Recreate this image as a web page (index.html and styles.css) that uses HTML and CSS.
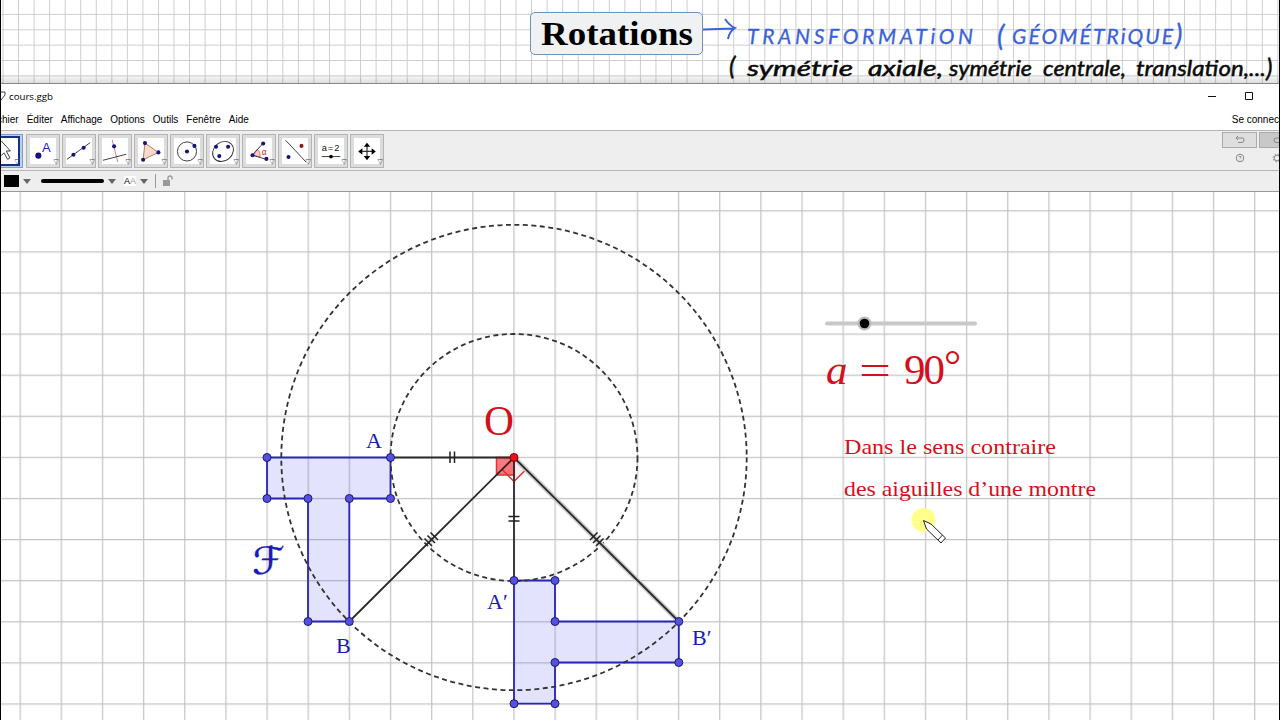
FILE: index.html
```
<!DOCTYPE html>
<html lang="fr">
<head>
    <meta charset="UTF-8">
    <meta name="viewport" content="width=device-width, initial-scale=1.0">
    <title>cours.ggb</title>
    <link rel="stylesheet" href="styles.css">
</head>
<body>

    <header class="notes">
        <h1 class="title"><svg width="152" height="38"><text x="0" y="31" textLength="152" lengthAdjust="spacingAndGlyphs">Rotations</text></svg></h1>
        <svg class="ink" width="576" height="84" viewBox="703 0 576 84">
            <path class="blue-stroke" d="M703 29.5 L733 28.5 M725 19 Q730 26 735 28 Q729 32 728 39"/>
            <g class="hand-blue">
                <text x="747" y="44" textLength="226">TRANSFORMATiON</text>
                <text class="paren" x="997" y="46">(</text>
                <text x="1012" y="44" textLength="161">GÉOMÉTRiQUE</text>
                <text class="paren" x="1175" y="45">)</text>
            </g>
            <g class="hand-black">
                <text class="paren" x="729" y="75">(</text>
                <text x="747" y="76" textLength="106" lengthAdjust="spacingAndGlyphs">symétrie</text>
                <text x="868" y="76" textLength="75" lengthAdjust="spacingAndGlyphs">axiale,</text>
                <text x="949" y="76" textLength="83" lengthAdjust="spacingAndGlyphs">symétrie</text>
                <text x="1043" y="76" textLength="83" lengthAdjust="spacingAndGlyphs">centrale,</text>
                <text x="1136" y="76" textLength="130" lengthAdjust="spacingAndGlyphs">translation,...</text>
                <text class="paren" x="1266" y="77">)</text>
            </g>
        </svg>
    </header>

    <div class="titlebar">
        <svg class="logo" width="6" height="12"><path d="M0 2 L4 2 L4 5 L0 10" fill="none" stroke="#444"/></svg>
        <span class="filename">cours.ggb</span>
        <svg class="winbtns" width="44" height="12">
            <path d="M1 6.500 H9 M38.500 2.500 H45.500 V9.500 H38.500 Z" fill="none" stroke="#111"/>
        </svg>
    </div>

    <nav class="menu">
        <span class="first">chier</span>
        <span>Éditer</span>
        <span>Affichage</span>
        <span>Options</span>
        <span>Outils</span>
        <span>Fenêtre</span>
        <span>Aide</span>
        <span class="login">Se connec</span>
    </nav>

    <div class="toolbar">
        <div class="tool active"><svg viewBox="0 0 18 28"><path class="cursor" d="M0 3 L10 14 H5.500 L9.500 21.500 L7 23 L3 16 L0 19"/></svg></div>
        <div class="tool"><svg viewBox="0 0 28 28"><circle class="pt" cx="9" cy="19" r="3.300"/><text class="big-a" x="13" y="15">A</text></svg></div>
        <div class="tool"><svg viewBox="0 0 28 28"><path d="M1 23 L26 5"/><circle class="pt" cx="8" cy="18" r="2.200"/><circle class="pt" cx="19" cy="10.500" r="2.200"/></svg></div>
        <div class="tool"><svg viewBox="0 0 28 28"><path class="red" d="M11 2 L17 26"/><path d="M1 24 L26 17.500"/><circle class="pt" cx="13" cy="9" r="2.200"/></svg></div>
        <div class="tool"><svg viewBox="0 0 28 28"><path class="tri" d="M7.500 5.500 L22 15.500 L5.500 23.500 Z"/><circle class="pt" cx="7.500" cy="5.500" r="2.200"/><circle class="pt" cx="22" cy="15.500" r="2.200"/><circle class="pt" cx="5.500" cy="23.500" r="2.200"/></svg></div>
        <div class="tool"><svg viewBox="0 0 28 28"><circle cx="14" cy="14.500" r="10.300"/><circle class="pt" cx="14" cy="14.500" r="2.200"/><circle class="pt" cx="22" cy="8.500" r="2.200"/></svg></div>
        <div class="tool"><svg viewBox="0 0 28 28"><ellipse cx="14" cy="14.500" rx="12" ry="10" transform="rotate(-40 14 14.500)"/><circle class="pt" cx="6.500" cy="9.500" r="2.200"/><circle class="pt" cx="19.500" cy="9.500" r="2.200"/><circle class="pt" cx="10" cy="19.500" r="2.200"/></svg></div>
        <div class="tool"><svg viewBox="0 0 28 28"><path class="wedge" d="M7 18.500 L12 12 Q16 15 15 20.500 Z"/><path d="M18 6 L7 18.500 L22 23"/><circle class="pt" cx="18.500" cy="6" r="2.200"/><circle class="pt" cx="7" cy="18.500" r="2.200"/><circle class="pt" cx="22" cy="22.500" r="2.200"/><text class="alpha" x="17" y="18">α</text></svg></div>
        <div class="tool"><svg viewBox="0 0 28 28"><path d="M4 2.500 L26 26"/><circle class="pt" cx="7" cy="20.500" r="2.200"/><circle class="rpt" cx="21" cy="8.500" r="2.200"/></svg></div>
        <div class="tool"><svg viewBox="0 0 28 28"><text class="a2" x="4" y="14" textLength="19">a=2</text><path d="M4 20 H24"/><circle cx="14" cy="20" r="2" class="blk"/></svg></div>
        <div class="tool"><svg viewBox="0 0 28 28"><path d="M6 14.500 H22 M14 6.500 V22.500" stroke-width="1.300"/><path class="blk" d="M14 5 L17.500 9.500 H10.500 Z M14 24 L17.500 19.500 H10.500 Z M4.500 14.500 L9 11 V18 Z M23.500 14.500 L19 11 V18 Z"/></svg></div>
        <div class="history">
            <div class="btn"><svg width="12" height="10"><path d="M2 3 H9 Q10 3 10 5 Q10 7.500 8 7.500 H4 M4 1 L2 3 L4 5"/></svg></div>
            <div class="btn dark"><svg width="12" height="10"><path d="M12 3 H5 Q3 3 3 5 Q3 7.500 5 7.500 H12"/></svg></div>
            <svg class="help" width="10" height="10"><circle cx="5" cy="5" r="3.800"/><path d="M3.800 4 Q5 2 6.200 4 L5 5.500 M5 6.800 V7.500"/></svg>
            <svg class="gear" width="10" height="10"><circle cx="5" cy="5" r="2.800"/><circle cx="5" cy="5" r="3.900" stroke-dasharray="1.500 1.560"/></svg>
        </div>
    </div>

    <div class="stylebar">
        <span class="swatch"></span>
        <span class="caret"></span>
        <span class="line-style"></span>
        <span class="caret"></span>
        <span class="size">A<i>A</i></span>
        <span class="caret"></span>
        <span class="sep"></span>
        <svg class="lock" width="12" height="12"><path d="M1 5 H8 V11 H1 Z" fill="#999"/><path d="M6 5 V3 Q6 1 8 1 Q10 1 10 3 V4.500" fill="none" stroke="#999" stroke-width="1.400"/></svg>
    </div>

    <svg class="board" width="1280" height="528" viewBox="0 192 1280 528">
        <defs>
            <pattern id="grid" width="41.150" height="41.100" patternUnits="userSpaceOnUse" x="20.200" y="210.900">
                <path d="M0 0.700 H41.150 M0.700 0 V41.100" stroke="#c3c3c3" stroke-width="1.200"/>
            </pattern>
        </defs>
        <rect x="0" y="192" width="1281" height="529" fill="url(#grid)" transform="translate(-0.700 -0.700)"/>

        <!-- figure and its image -->
        <g class="shape">
            <path d="M267 457.500 H390.500 V498.500 H349.300 V621.500 H308 V498.500 H267 Z"/>
            <path d="M514 580.500 H555 V621.500 H678.800 V662.500 H555 V703.700 H514 Z"/>
        </g>

        <!-- circles of centre O -->
        <circle class="dashed" cx="514" cy="457.500" r="123.500"/>
        <circle class="dashed" cx="514" cy="457.500" r="232.700"/>

        <!-- right angles -->
        <path class="angle" d="M514 457.500 L526 469.500 L514 481.500 L502 469.500 Z"/>
        <path class="angle full" d="M514 457.500 H496.500 V475 H514 Z"/>

        <path class="halo" d="M514 457.500 L678.800 621.500"/>
        <path class="seg" d="M390.500 457.500 H514 V580.500 M349.300 621.500 L514 457.500 L678.800 621.500"/>
        <g class="marks">
            <path d="M450 451.500 V463 M454.500 451.500 V463 M508.500 516.500 H519.500 M508.500 521 H519.500"/>
            <path d="M424.500 538.500 L432 546 M427.500 535.500 L435 543 M430.500 532.500 L438 540"/>
            <path d="M597.500 532.500 L590 540 M600.500 535.500 L593 543 M603.500 538.500 L596 546"/>
        </g>

        <g class="dots">
            <circle cx="267" cy="457.500" r="4"/>
            <circle cx="390.500" cy="457.500" r="4"/>
            <circle cx="267" cy="498.500" r="4"/>
            <circle cx="308" cy="498.500" r="4"/>
            <circle cx="349.300" cy="498.500" r="4"/>
            <circle cx="390.500" cy="498.500" r="4"/>
            <circle cx="308" cy="621.500" r="4"/>
            <circle cx="349.300" cy="621.500" r="4"/>
            <circle cx="514" cy="580.500" r="4"/>
            <circle cx="555" cy="580.500" r="4"/>
            <circle cx="555" cy="621.500" r="4"/>
            <circle cx="678.800" cy="621.500" r="4"/>
            <circle cx="678.800" cy="662.500" r="4"/>
            <circle cx="555" cy="662.500" r="4"/>
            <circle cx="514" cy="703.700" r="4"/>
            <circle cx="555" cy="703.700" r="4"/>
            <circle class="center" cx="514" cy="457.500" r="4"/>
        </g>

        <g class="label">
            <text x="366" y="448">A</text>
            <text x="336" y="653">B</text>
            <text x="487" y="609">A′</text>
            <text x="692" y="645">B′</text>
            <text class="script" x="252" y="574" textLength="32" lengthAdjust="spacingAndGlyphs">ℱ</text>
        </g>

        <g class="red-text">
            <text x="484" y="434.500" font-size="43" textLength="30" lengthAdjust="spacingAndGlyphs">O</text>
            <text x="826" y="384" font-size="43" font-style="italic">a</text>
            <text x="859" y="384" font-size="43" textLength="32" lengthAdjust="spacingAndGlyphs">=</text>
            <text x="904" y="384" font-size="43" textLength="41">90</text>
            <text x="944" y="379" font-size="43" textLength="17">°</text>
            <text x="844" y="454" font-size="22" textLength="212" lengthAdjust="spacingAndGlyphs">Dans le sens contraire</text>
            <text x="844" y="496" font-size="22" textLength="252" lengthAdjust="spacingAndGlyphs">des aiguilles d’une montre</text>
        </g>

        <!-- slider a -->
        <path class="track" d="M827 323.500 H975"/>
        <circle cx="864.500" cy="323.500" r="7" fill="#bbb"/>
        <circle cx="864.500" cy="323.500" r="4.800"/>

        <!-- pen cursor -->
        <circle cx="923.500" cy="520" r="12" fill="#ffff8c"/>
        <path class="pen" d="M923.500 520.500 L926.500 529 L941 543 L945.500 538 L931 524 Z M938 540 L942.500 535"/>
    </svg>

</body>
</html>
```
FILE: styles.css
```
* {
    box-sizing: border-box;
}
body {
    margin: 0;
    width: 1280px;
    height: 720px;
    overflow: hidden;
    background: white;
    font-family: "Liberation Sans", Arial, sans-serif;
    border-left: 1px solid #000;
    border-right: 1px solid #000;
}
svg {
    display: block;
}
.notes {
    height: 84px;
    display: flex;
    align-items: flex-start;
    padding-left: 529px;
    border-bottom: 1px solid #888;
    background-color: white;
    background-image:
        linear-gradient(to bottom, transparent 74px, rgba(0, 0, 0, 0.15) 84px),
        linear-gradient(to right, #cdcdcd 1px, transparent 1px),
        linear-gradient(to bottom, #cdcdcd 1px, transparent 1px);
    background-size: 100% 84px, 15.550px 15.550px, 15.500px 15.400px;
    background-position: 0 0, 1.500px 0, 0 -1.500px;
}
.title {
    margin: 12px 0 0;
    width: 173px;
    height: 43px;
    flex: none;
    padding: 1px 0 0 10px;
    border: 1px solid #6d93bd;
    border-radius: 5px;
    background: #f0f1f3;
    font-family: "Liberation Serif", serif;
    font-size: 34px;
}
.ink {
    flex: none;
}
.blue-stroke {
    fill: none;
    stroke: #3a62d8;
    stroke-width: 2;
}
.hand-blue {
    font: italic 21px Lato, sans-serif;
    fill: #3a62d8;
    stroke: #3a62d8;
    stroke-width: 0.300;
}
.hand-blue .paren {
    font-size: 29px;
}
.hand-black {
    font: italic 22px Lato, sans-serif;
    fill: #0a0a0a;
    stroke: #0a0a0a;
    stroke-width: 0.500;
}
.hand-black .paren {
    font-size: 25px;
}
.titlebar {
    height: 25px;
    display: flex;
    align-items: center;
    padding-bottom: 1px;
    font: 9.700px "Open Sans", sans-serif;
}
.filename {
    margin-left: 2px;
}
.winbtns {
    margin-left: auto;
    margin-right: 28px;
    overflow: visible;
}
.menu {
    height: 21px;
    display: flex;
    align-items: center;
    gap: 8px;
    font-size: 10px;
}
.menu .first {
    margin-left: -4px;
}
.login {
    margin-left: auto;
}
.toolbar {
    height: 41px;
    display: flex;
    align-items: center;
    gap: 2px;
    background: #eee;
    border-top: 1px solid #b5b5b5;
    border-bottom: 1px solid #b5b5b5;
}
.tool {
    width: 34px;
    height: 34px;
    flex: none;
    padding: 3px;
    background: #dcdcdc;
    border: 1px solid #b4b4b4;
    position: relative;
}
.tool svg {
    width: 26px;
    height: 26px;
    background: white;
    fill: none;
    stroke: #333;
}
.tool::after {
    content: "▽";
    position: absolute;
    right: 0;
    bottom: 1px;
    font: 7px "DejaVu Sans", sans-serif;
    color: #444;
}
.tool.active {
    width: 22px;
    margin-right: 1px;
    padding: 1px 1px 1px 0;
    background: #b9d0ec;
    border: 1px solid #7d9ccc;
    border-left: 0;
}
.tool.active svg {
    width: 19px;
    height: 30px;
    border: 2px solid #14328c;
    border-left: 0;
}
.tool.active::after {
    right: 2px;
}
.tool .pt {
    fill: #14147a;
    stroke: none;
}
.tool .rpt {
    fill: #8c1a1a;
    stroke: none;
}
.tool .blk {
    fill: #000;
    stroke: none;
}
.tool .red {
    stroke: #c77;
}
.tool .tri {
    fill: #f5d9ca;
    stroke: #a76;
}
.tool .wedge {
    fill: #f9cccc;
    stroke: #d66;
}
.tool text {
    stroke: none;
}
.big-a {
    font-size: 14px;
    fill: #2222c0;
}
.alpha {
    font-size: 9px;
    fill: #d22;
}
.a2 {
    font-size: 10px;
    fill: #111;
}
.history {
    margin-left: auto;
    width: 57px;
    height: 37px;
    display: grid;
    grid-template-columns: 35px 35px;
    grid-template-rows: 16px 18px;
    gap: 1px 2px;
    overflow: hidden;
    align-items: center;
    justify-items: center;
}
.history svg {
    fill: none;
    stroke: #888;
}
.btn {
    width: 35px;
    height: 16px;
    background: #dedede;
    border: 1px solid #aaa;
    display: flex;
    align-items: center;
    justify-content: center;
}
.btn.dark {
    background: #c8c8c8;
}
.stylebar {
    height: 21px;
    display: flex;
    align-items: center;
    background: #eee;
    border-bottom: 1px solid #999;
}
.swatch {
    width: 15px;
    height: 12px;
    margin-left: 3px;
    background: #000;
}
.caret {
    margin-left: 4px;
    border: 4px solid transparent;
    border-top: 5px solid #666;
    border-bottom: 0;
}
.line-style {
    width: 63px;
    height: 4px;
    margin-left: 10px;
    border-radius: 2px;
    background: #000;
}
.size {
    margin-left: 8px;
    background: white;
    font-size: 9px;
}
.size i {
    font-style: normal;
    color: #999;
}
.sep {
    width: 1px;
    height: 14px;
    margin: 0 6px 0 7px;
    background: #999;
}
.board {
    margin-left: -1px;
}
.shape {
    fill: rgba(80, 80, 240, 0.16);
    stroke: #2a24b8;
    stroke-width: 1.800;
}
.dashed {
    fill: none;
    stroke: #333;
    stroke-width: 1.800;
    stroke-dasharray: 5 3.500;
}
.angle {
    fill: rgba(255, 0, 0, 0.08);
    stroke: #e03038;
    stroke-width: 1.500;
}
.angle.full {
    fill: rgba(255, 30, 40, 0.6);
}
.halo {
    stroke: #ccc;
    stroke-width: 5;
}
.seg {
    fill: none;
    stroke: #2a2a2a;
    stroke-width: 1.800;
}
.marks {
    stroke: #222;
    stroke-width: 1.500;
}
.dots {
    fill: #5550e0;
    stroke: #1c1a6a;
}
.dots .center {
    fill: #e8101a;
    stroke: #800;
}
.label {
    font: 22px "Liberation Serif", serif;
    fill: #1a1ab4;
}
.label .script {
    font: italic 38px "DejaVu Serif", "DejaVu Sans", serif;
    stroke: #1a1ab4;
    stroke-width: 0.400;
}
.red-text {
    font-family: "Liberation Serif", serif;
    fill: #d4101c;
}
.track {
    stroke: #c8c8c8;
    stroke-width: 4;
    stroke-linecap: round;
}
.pen {
    fill: white;
    stroke: #222;
}
```
